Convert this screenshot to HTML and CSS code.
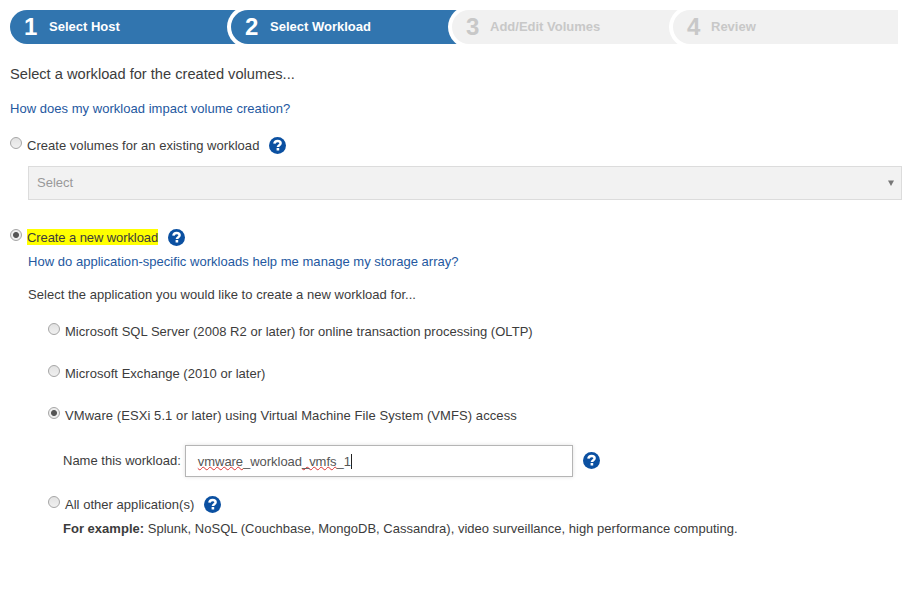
FILE: index.html
```html
<!DOCTYPE html>
<html lang="en">
<head>
    <meta charset="UTF-8">
    <meta name="viewport" content="width=device-width, initial-scale=1.0">
    <title>Create Volumes - Select Workload</title>
    <link rel="stylesheet" href="styles.css">
</head>
<body>
    <svg class="defs" width="0" height="0">
        <symbol id="help" viewBox="0 0 17 17">
            <circle cx="8.5" cy="8.5" r="8.5" fill="#0b50a1"/>
            <path d="M5.400 6.600C5.600 4.500 7 3.900 8.600 3.900c1.800 0 3 .9 3 2.300 0 2-2.700 1.900-2.700 3.900" fill="none" stroke="#fff" stroke-width="2.500"/>
            <rect x="7.600" y="11" width="2.600" height="2.500" fill="#fff"/>
        </symbol>
    </svg>

    <div class="wizard">
        <div class="steps">
            <div class="step done"><span class="num">1</span><span class="name">Select Host</span></div>
            <div class="step done"><span class="num">2</span><span class="name">Select Workload</span></div>
            <div class="step"><span class="num">3</span><span class="name">Add/Edit Volumes</span></div>
            <div class="step"><span class="num">4</span><span class="name">Review</span></div>
        </div>

        <h1>Select a workload for the created volumes...</h1>
        <a class="link" href="#">How does my workload impact volume creation?</a>

        <div class="option existing">
            <span class="radio"></span>
            <label>Create volumes for an existing workload</label>
            <svg class="help"><use href="#help"/></svg>
        </div>
        <div class="select">
            <span>Select</span>
            <svg class="arrow" viewBox="0 0 6 6"><path d="M0 0.500h6L3 6z" fill="#777"/></svg>
        </div>

        <div class="option new">
            <span class="radio checked"></span>
            <mark>Create a new workload</mark>
            <svg class="help"><use href="#help"/></svg>
        </div>

        <div class="new-workload">
            <a class="link" href="#">How do application-specific workloads help me manage my storage array?</a>
            <p>Select the application you would like to create a new workload for...</p>

            <div class="apps">
                <div class="option">
                    <span class="radio"></span>
                    <label>Microsoft SQL Server (2008 R2 or later) for online transaction processing (OLTP)</label>
                </div>
                <div class="option">
                    <span class="radio"></span>
                    <label>Microsoft Exchange (2010 or later)</label>
                </div>
                <div class="option vmware">
                    <span class="radio checked"></span>
                    <label>VMware (ESXi 5.1 or later) using Virtual Machine File System (VMFS) access</label>
                </div>
            </div>

            <div class="name-row">
                <label>Name this workload:</label>
                <div class="input"><span class="misspelled">vmware</span>_workload<span class="misspelled">_vmfs</span>_1<span class="caret"></span></div>
                <svg class="help"><use href="#help"/></svg>
            </div>

            <div class="option other">
                <span class="radio"></span>
                <label>All other application(s)</label>
                <svg class="help"><use href="#help"/></svg>
            </div>
            <p class="example"><b>For example:</b> Splunk, NoSQL (Couchbase, MongoDB, Cassandra), video surveillance, high performance computing.</p>
        </div>
    </div>
</body>
</html>
```
FILE: styles.css
```css
* {
    margin: 0;
    padding: 0;
    box-sizing: border-box;
}

body {
    font-family: "Liberation Sans", Arial, sans-serif;
    font-size: 13px;
    line-height: 16px;
    color: #3c3c3c;
    background: #fff;
    white-space: nowrap;
}

.defs {
    display: block;
}

.wizard {
    padding: 10px;
}

/* progress steps */
.steps {
    display: flex;
    width: 888px;
    height: 34px;
    overflow: hidden;
}

.step {
    display: flex;
    align-items: center;
    flex: 0 0 242px;
    margin-right: -21px;
    padding-left: 14px;
    border-radius: 17px 0 0 17px;
    box-shadow: 0 0 0 4px #fff;
    background: #f1f1f1;
    color: #c8c8c8;
    font-weight: bold;
}

.step:last-child {
    flex: 1;
    margin-right: 0;
}

.step.done {
    background: #3175af;
    color: #fff;
}

.num {
    width: 24px;
    font-size: 24px;
}

.done .num {
    width: 25px;
}

h1 {
    margin-top: 20px;
    font-size: 14.65px;
    font-weight: normal;
    line-height: 20px;
}

.link {
    display: block;
    color: #2458a0;
    text-decoration: none;
}

.link,
.option label,
.new-workload p {
    letter-spacing: 0.03px;
}

h1 + .link {
    margin-top: 17px;
}

.option {
    display: flex;
    align-items: center;
    height: 18px;
}

.option label {
    padding-top: 2px;
}

.radio {
    width: 12px;
    height: 12px;
    margin: -4px 5px 0 0;
    border: 1px solid #a6a6a6;
    border-radius: 50%;
    background: linear-gradient(#e2e2e2, #f0f0f0);
}

.radio.checked {
    background: radial-gradient(circle, #555 2.5px, #eee 3.5px);
}

.help {
    width: 17px;
    height: 17px;
    margin-left: 10px;
}

.existing {
    margin-top: 19px;
}

.select {
    display: flex;
    align-items: center;
    justify-content: space-between;
    width: 874px;
    height: 34px;
    margin: 12px 0 0 18px;
    padding: 0 7px 0 8px;
    border: 1px solid #dcdcdc;
    background: #f2f2f2;
    color: #999;
}

.arrow {
    width: 6px;
    height: 6px;
}

.new {
    margin-top: 28px;
}

mark {
    height: 16px;
    background: #ff0;
    color: inherit;
    letter-spacing: -0.09px;
    line-height: 18px;
}

.new-workload {
    margin: 8px 0 0 18px;
}

.new-workload p {
    margin-top: 17px;
}

.apps {
    display: flex;
    flex-direction: column;
    gap: 24px;
    margin: 19px 0 0 20px;
}

.option.vmware label {
    letter-spacing: 0.075px;
}

.name-row {
    display: flex;
    align-items: center;
    margin: 21px 0 0 35px;
}

.name-row .help {
    margin-top: -1px;
}

.input {
    width: 388px;
    height: 32px;
    margin-left: 4px;
    padding: 0 12px;
    border: 1px solid #b5b5b5;
    box-shadow: 0 0 4px #e0e0e0;
    color: #555;
    letter-spacing: -0.04px;
    line-height: 32px;
}

.misspelled {
    text-decoration: underline wavy #d33 1px;
    text-underline-offset: 0;
    text-decoration-skip-ink: none;
}

.caret {
    display: inline-block;
    width: 1px;
    height: 15px;
    background: #222;
    vertical-align: -3px;
}

.other {
    margin: 18px 0 0 20px;
}

.new-workload .example {
    margin: 8px 0 0 35px;
    letter-spacing: 0.015px;
}
```
